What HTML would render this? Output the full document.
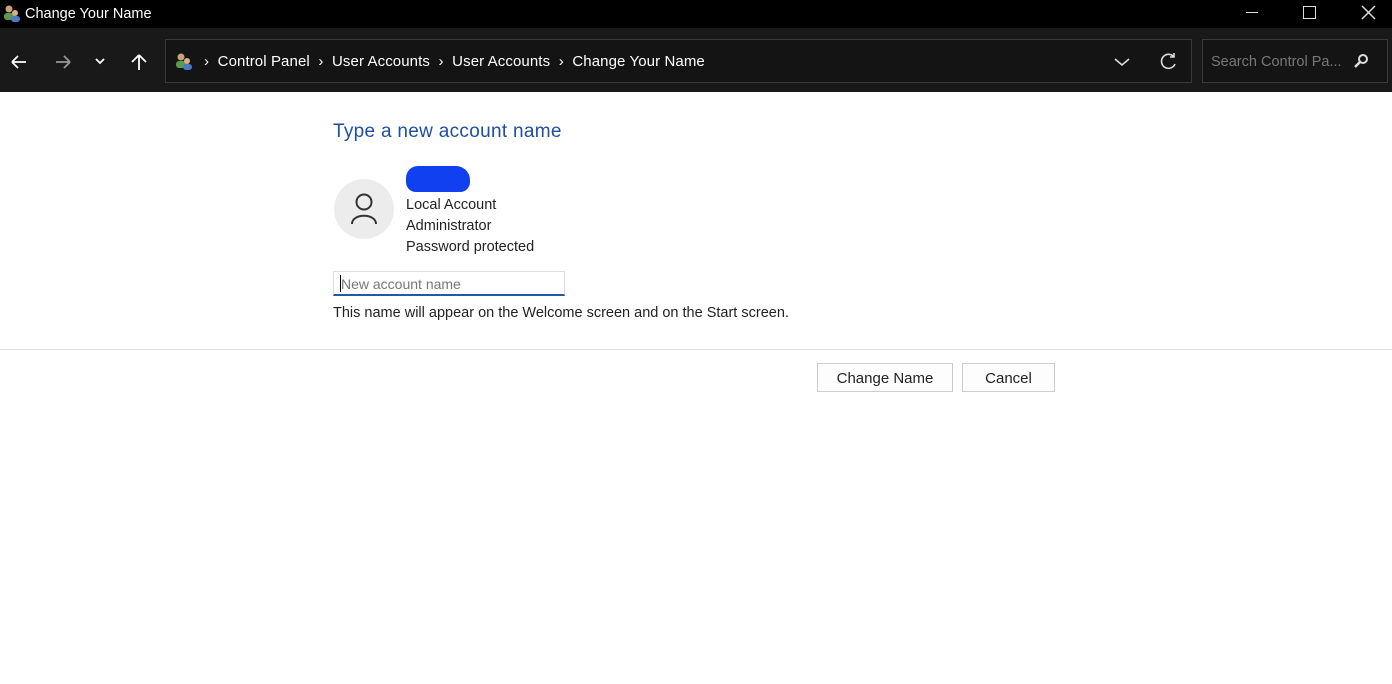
<!DOCTYPE html>
<html><head><style>
*{margin:0;padding:0;box-sizing:border-box}
body{width:1392px;height:684px;background:#fff;font-family:"Liberation Sans",sans-serif;position:relative;overflow:hidden}
.a{position:absolute}
.top{left:0;top:0;width:1392px;height:28px;background:#000}
.nav{left:0;top:28px;width:1392px;height:64px;background:#191919}
.w{color:#fff;font-size:15px}
.t{color:#222;font-size:14.5px}
.btn{border:1px solid #ccc;background:#fdfdfd;height:29px;font-size:15px;color:#222;text-align:center;line-height:27px}
</style></head><body>
<div class="a top"></div>
<div class="a nav"></div>
<svg class="a" style="left:2px;top:3px" width="20" height="20"><circle cx="7" cy="6" r="3.5" fill="#c9a27a"/><rect x="2" y="10" width="10" height="7" rx="3" fill="#5a9a4a"/><circle cx="13" cy="10" r="3" fill="#d8b088"/><rect x="9" y="13" width="9" height="6" rx="3" fill="#4a7ac8"/></svg>
<div class="a w" style="left:25px;top:6px;font-size:14.5px">Change Your Name</div>
<div class="a" style="left:1246px;top:12px;width:12px;height:1px;background:#ddd"></div>
<div class="a" style="left:1303px;top:6px;width:13px;height:13px;border:1.5px solid #ddd"></div>
<svg class="a" style="left:1361px;top:5px" width="15" height="15"><path d="M1 1L14 14M14 1L1 14" stroke="#ddd" stroke-width="1.5"/></svg>
<svg class="a" style="left:8px;top:50px" width="145" height="24" fill="none" stroke-width="1.8">
<path d="M4 12H18M4 12L10 6M4 12L10 18" stroke="#fff"/>
<path d="M48 12H62M62 12L56 6M62 12L56 18" stroke="#999"/>
<path d="M88 9L92 13L96 9" stroke="#fff"/>
<path d="M131 20V5M131 5L124 12M131 5L138 12" stroke="#fff"/>
</svg>
<div class="a" style="left:165px;top:39px;width:1027px;height:44px;border:1px solid #3a3a3a;background:#141414"></div>
<svg class="a" style="left:174px;top:51px" width="20" height="20"><circle cx="7" cy="6" r="3.5" fill="#c9a27a"/><rect x="2" y="10" width="10" height="7" rx="3" fill="#5a9a4a"/><circle cx="13" cy="10" r="3" fill="#d8b088"/><rect x="9" y="13" width="9" height="6" rx="3" fill="#4a7ac8"/></svg>
<div class="a w" style="left:204px;top:53px;white-space:pre;letter-spacing:0.1px">›  Control Panel  ›  User Accounts  ›  User Accounts  ›  Change Your Name</div>
<svg class="a" style="left:1112px;top:52px;" width="70" height="20" fill="none" stroke="#ddd" stroke-width="1.6"><path d="M3 7L10 13L17 7"/><path d="M62 5A7 7 0 1 0 63 12M62 1V5H58"/></svg>
<div class="a" style="left:1202px;top:39px;width:186px;height:44px;border:1px solid #3a3a3a;background:#141414"></div>
<div class="a" style="left:1211px;top:54px;color:#777;font-size:14.5px">Search Control Pa...</div>
<svg class="a" style="left:1353px;top:53px" width="16" height="16"><circle cx="10" cy="6" r="4" stroke="#ddd" stroke-width="2" fill="none"/><path d="M7 9L2 14" stroke="#ddd" stroke-width="2.5"/></svg>
<div class="a" style="left:333px;top:121px;font-size:19px;color:#1e4fa0;letter-spacing:0.3px">Type a new account name</div>
<div class="a" style="left:334px;top:179px;width:60px;height:60px;border-radius:50%;background:#ececec"></div>
<svg class="a" style="left:348px;top:192px" width="32" height="34" fill="none" stroke="#333" stroke-width="2"><circle cx="16" cy="10" r="7.5"/><path d="M4 32C4 21 28 21 28 32"/></svg>
<div class="a" style="left:406px;top:166px;width:64px;height:26px;background:#1040f0;border-radius:12px 14px 10px 10px"></div>
<div class="a t" style="left:406px;top:195px;line-height:21px">Local Account<br>Administrator<br>Password protected</div>
<div class="a" style="left:333px;top:271px;width:232px;height:25px;border:1px solid #ddd;border-bottom:2px solid #1e5aa8"></div>
<div class="a" style="left:340px;top:275px;width:1px;height:17px;background:#000"></div>
<div class="a" style="left:341px;top:276px;font-size:14px;color:#777">New account name</div>
<div class="a t" style="left:333px;top:305px">This name will appear on the Welcome screen and on the Start screen.</div>
<div class="a" style="left:0;top:349px;width:1392px;height:1px;background:#ddd"></div>
<div class="a btn" style="left:817px;top:363px;width:136px;line-height:29px">Change Name</div>
<div class="a btn" style="left:962px;top:363px;width:93px;line-height:29px">Cancel</div>
</body></html>
